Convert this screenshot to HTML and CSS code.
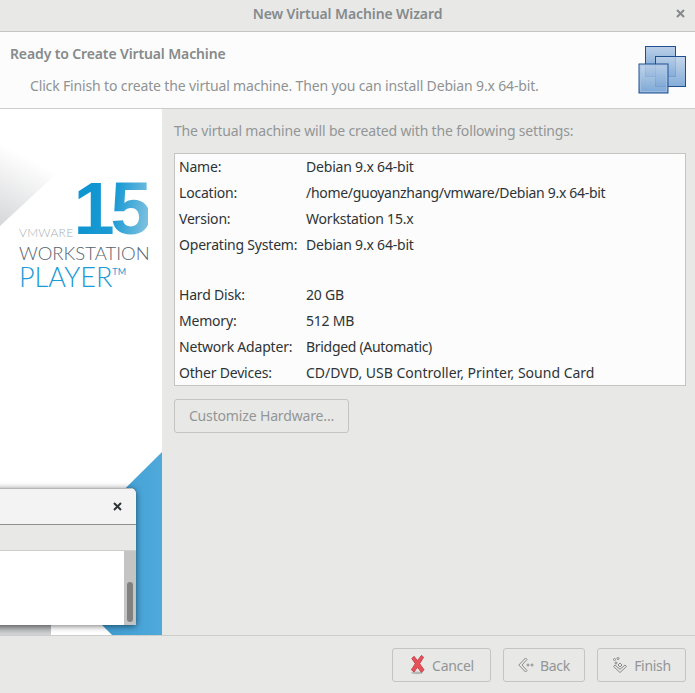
FILE: index.html
```html
<!DOCTYPE html>
<html lang="en">
<head>
  <meta charset="UTF-8">
  <title>New Virtual Machine Wizard</title>
  <link rel="stylesheet" href="styles.css">
</head>
<body>
  <div class="wizard">
    <header class="titlebar">
      <span class="title">New Virtual Machine Wizard</span>
      <svg class="close" width="9" height="9" viewBox="0 0 9 9">
        <path d="M1 1 L8 8 M8 1 L1 8" stroke="#85898a" stroke-width="2"/>
      </svg>
    </header>

    <section class="banner">
      <div class="banner-text">
        <h1>Ready to Create Virtual Machine</h1>
        <p>Click Finish to create the virtual machine. Then you can install Debian 9.x 64-bit.</p>
      </div>
      <svg class="stack" width="48" height="48" viewBox="0 0 48 48">
        <defs>
          <linearGradient id="pane" x1="0" y1="0" x2="0" y2="1">
            <stop offset="0" stop-color="#bcd0e8"/>
            <stop offset="1" stop-color="#6f9fd2"/>
          </linearGradient>
        </defs>
        <rect x="7.5" y="0.5" width="30" height="30" fill="url(#pane)" stroke="#1f4e91"/>
        <rect x="17.5" y="10.5" width="30" height="30" fill="url(#pane)" stroke="#1f4e91" fill-opacity=".85"/>
        <rect x="1" y="18" width="29" height="29" fill="url(#pane)" stroke="#1f4e91" fill-opacity=".9"/>
        <rect x="2.5" y="19.5" width="26" height="26" fill="none" stroke="#a9c3e2" stroke-opacity=".7"/>
      </svg>
    </section>

    <main class="content">
      <aside class="side">
        <svg class="corner-top" width="56" height="120" viewBox="0 0 56 120">
          <defs>
            <linearGradient id="shade" gradientUnits="userSpaceOnUse" x1="0" y1="116" x2="34" y2="52">
              <stop offset="0" stop-color="#d6d7d9"/>
              <stop offset="1" stop-color="#ffffff"/>
            </linearGradient>
          </defs>
          <polygon points="0,14 55,66 0,117" fill="url(#shade)"/>
        </svg>
        <div class="logo">
          <div class="logo-top">
            <span class="vmware">VMWARE</span>
            <span class="version">15</span>
          </div>
          <div class="workstation">WORKSTATION</div>
          <div class="player">PLAYER<sup>TM</sup></div>
        </div>
        <svg class="corner-blue" width="120" height="183" viewBox="0 0 120 183">
          <defs>
            <linearGradient id="blue" x1="0" y1="0" x2="1" y2="0">
              <stop offset="0" stop-color="#2f8fc6"/>
              <stop offset="1" stop-color="#4fa9db"/>
            </linearGradient>
          </defs>
          <polygon points="120,0 3,116 70,183 120,183" fill="url(#blue)"/>
        </svg>
        <div class="strip"></div>
        <div class="mini">
          <div class="mini-title">
            <svg width="9" height="9" viewBox="0 0 9 9">
              <path d="M1 1 L8 8 M8 1 L1 8" stroke="#2e3436" stroke-width="2"/>
            </svg>
          </div>
          <div class="mini-bar"></div>
          <div class="mini-body"><div class="mini-scroll"><div class="mini-thumb"></div></div></div>
        </div>
      </aside>

      <div class="settings">
        <p class="intro">The virtual machine will be created with the following settings:</p>
        <div class="summary">
          <div class="row"><span>Name:</span><span>Debian 9.x 64-bit</span></div>
          <div class="row"><span>Location:</span><span class="tight">/home/guoyanzhang/vmware/Debian 9.x 64-bit</span></div>
          <div class="row"><span>Version:</span><span>Workstation 15.x</span></div>
          <div class="row"><span>Operating System:</span><span>Debian 9.x 64-bit</span></div>
          <div class="row row-gap"><span>Hard Disk:</span><span>20 GB</span></div>
          <div class="row"><span>Memory:</span><span>512 MB</span></div>
          <div class="row"><span>Network Adapter:</span><span class="tight">Bridged (Automatic)</span></div>
          <div class="row"><span>Other Devices:</span><span class="loose">CD/DVD, USB Controller, Printer, Sound Card</span></div>
        </div>
        <button class="btn customize">Customize Hardware...</button>
      </div>
    </main>

    <footer class="actions">
      <button class="btn cancel">
        <svg width="17" height="20" viewBox="0 1 17 23">
          <ellipse cx="8" cy="21.5" rx="7" ry="1.5" fill="#b5b5b5"/>
          <path d="M2 5 L4.5 2.5 L8.5 7.5 L13 1.5 L15.5 3.5 L11 11 L16 18 L13 21 L8.5 15 L4.5 20.5 L1.5 18 L6 11 Z" fill="#e5525a" stroke="#c23b43"/>
        </svg>
        Cancel
      </button>
      <button class="btn back">
        <svg width="16" height="16" viewBox="0 0 16 16" fill="#e8e8e7" stroke="#8a8a8a">
          <path d="M7.5 1 L0.8 8 L7.5 15 L9 13.5 L4 8 L9 2.5 Z"/>
          <circle cx="10" cy="8" r="1"/>
          <circle cx="14" cy="8" r="1"/>
        </svg>
        Back
      </button>
      <button class="btn finish">
        <svg width="16" height="16" viewBox="0 0 16 16" fill="#e8e8e7" stroke="#8a8a8a">
          <circle cx="2.5" cy="2.5" r="1"/>
          <circle cx="6" cy="1.5" r="1"/>
          <circle cx="4" cy="6" r="1"/>
          <path d="M1.5 9.5 L8 15.5 L14.5 9.5 L13 8 L8 12.3 L3 8 Z"/>
          <path d="M8 6 L10 8 L8 10 L6 8 Z"/>
        </svg>
        Finish
      </button>
    </footer>
  </div>
</body>
</html>
```
FILE: styles.css
```css
* {
  box-sizing: border-box;
}

html, body {
  margin: 0;
  height: 100%;
  overflow: hidden;
}

body {
  font-family: "Noto Sans", sans-serif;
  font-size: 14px;
  color: #2e3436;
  background-color: #e8e8e7;
}

.wizard {
  display: flex;
  flex-direction: column;
  height: 693px;
}

.titlebar {
  display: flex;
  align-items: center;
  justify-content: center;
  position: relative;
  height: 32px;
  flex: none;
  padding-bottom: 4px;
  border-bottom: 1px solid #c4c4c2;
  color: #858a8b;
}

.title {
  font-weight: 600;
  letter-spacing: -0.1px;
}

.close {
  position: absolute;
  right: 10px;
  top: 9px;
}

.banner {
  display: flex;
  justify-content: space-between;
  height: 77px;
  flex: none;
  padding: 13px 9px 0 10px;
  background-color: #fcfcfc;
  border-bottom: 1px solid #cdcdcb;
}

.banner h1 {
  margin: 0;
  font-size: 14px;
  line-height: 18px;
  font-weight: 600;
  letter-spacing: -0.13px;
  color: #858a8b;
}

.banner p {
  margin: 14px 0 0 20px;
  line-height: 18px;
  letter-spacing: -0.15px;
  color: #8f9393;
}

.stack {
  margin-top: 1px;
}

.content {
  display: flex;
  flex: 1;
  min-height: 0;
}

.side {
  position: relative;
  width: 162px;
  flex: none;
  background-color: #fff;
  overflow: hidden;
}

.corner-top {
  position: absolute;
  left: 0;
  top: 0;
}

.corner-blue {
  position: absolute;
  right: 0;
  bottom: 0;
}

.strip {
  position: absolute;
  left: 0;
  bottom: 0;
  width: 51px;
  height: 12px;
  background: linear-gradient(#9fa3a6, #d3d5d6);
}

.logo {
  position: absolute;
  left: 19px;
  top: 70px;
  width: 135px;
  font-family: "Lato", sans-serif;
}

.logo-top {
  display: flex;
  align-items: flex-end;
  justify-content: space-between;
  height: 60px;
}

.vmware {
  font-size: 12px;
  font-weight: 300;
  line-height: 14px;
  letter-spacing: 0.3px;
  margin-bottom: -1px;
  color: #a8adb1;
}

.version {
  font-family: "Liberation Sans", sans-serif;
  font-size: 74px;
  line-height: 60px;
  font-weight: 700;
  letter-spacing: -4px;
  margin-right: 7px;
  background: linear-gradient(100deg, #0f95d0 20%, #1c9bd4 55%, #86c4e0 100%);
  -webkit-background-clip: text;
  background-clip: text;
  color: transparent;
}

.workstation {
  font-size: 18.5px;
  font-weight: 300;
  line-height: 24px;
  margin-top: 2px;
  color: #56636f;
}

.player {
  font-size: 27px;
  font-weight: 300;
  line-height: 28px;
  margin-top: -2px;
  color: #1b9ad6;
}

.player sup {
  font-size: 9px;
  font-weight: 400;
  vertical-align: 12px;
  line-height: 0;
}

.mini {
  position: absolute;
  left: -200px;
  top: 379px;
  width: 336px;
  height: 137px;
  border-radius: 0 6px 0 0;
  background-color: #fff;
  box-shadow: 0 1px 6px rgba(0, 0, 0, .55);
  overflow: hidden;
}

.mini-title {
  display: flex;
  align-items: center;
  justify-content: flex-end;
  height: 37px;
  padding-right: 14px;
  background-color: #f3f3f3;
  border-top: 1px solid #b5b5b3;
  border-bottom: 1px solid #8f8f8c;
}

.mini-bar {
  height: 26px;
  background-color: #e8e8e7;
  border-bottom: 1px solid #cdcdcb;
}

.mini-body {
  display: flex;
  justify-content: flex-end;
  height: 75px;
}

.mini-scroll {
  width: 12px;
  background-color: #c3c4c3;
  padding: 31px 3px 3px;
}

.mini-thumb {
  height: 40px;
  border-radius: 3px;
  background-color: #7f8281;
}

.settings {
  flex: 1;
  padding: 13px 9px 0 12px;
}

.intro {
  margin: 0 0 13px;
  line-height: 18px;
  letter-spacing: -0.16px;
  color: #929696;
}

.summary {
  height: 233px;
  padding: 0 4px;
  background-color: #fcfcfc;
  border: 1px solid #c4c4c2;
}

.row {
  display: grid;
  grid-template-columns: 127px 1fr;
  height: 26px;
  line-height: 26px;
  letter-spacing: -0.2px;
}

.row-gap {
  margin-top: 24px;
}

.tight {
  letter-spacing: -0.3px;
}

.loose {
  letter-spacing: 0;
}

.btn {
  display: inline-flex;
  align-items: center;
  justify-content: center;
  gap: 6px;
  height: 34px;
  padding: 0;
  font-family: inherit;
  font-size: 14px;
  letter-spacing: -0.3px;
  color: #929696;
  background-color: #e8e8e7;
  border: 1px solid #c4c4c2;
  border-radius: 3px;
}

.customize {
  width: 175px;
  margin-top: 13px;
  padding-bottom: 2px;
  letter-spacing: -0.15px;
}

.actions {
  display: flex;
  justify-content: flex-end;
  gap: 12px;
  height: 58px;
  flex: none;
  padding: 12px 9px 0 0;
  border-top: 1px solid #cdcdcb;
}

.cancel {
  width: 99px;
}

.back {
  width: 82px;
}

.finish {
  width: 89px;
}
```
